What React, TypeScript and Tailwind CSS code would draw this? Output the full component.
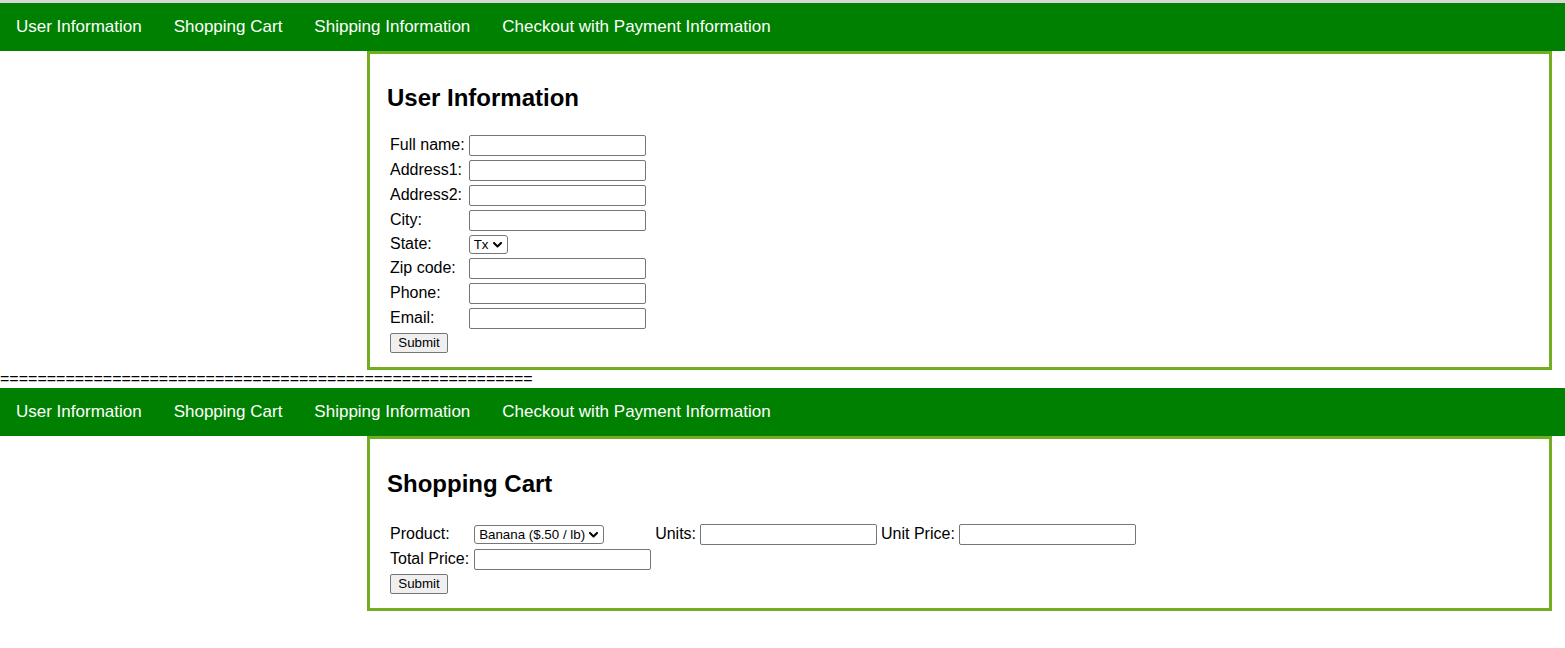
import React from "react";

const NAV_ITEMS = ["User Information", "Shopping Cart", "Shipping Information", "Checkout with Payment Information"];

const STATES = ["Tx", "Ok", "Nm", "La", "Ar"];
const PRODUCTS = ["Banana ($.50 / lb)", "Apple ($1.00 / lb)", "Orange ($.75 / lb)"];

function TopNav() {
  return (
    <ul className="flex bg-[#008000]">
      {NAV_ITEMS.map((item) => (
        <li key={item}>
          <a href="#" className="block px-[16px] py-[14px] text-[17px] leading-[20px] text-white">
            {item}
          </a>
        </li>
      ))}
    </ul>
  );
}

function Chevron() {
  return (
    <svg width="9" height="6" viewBox="0 0 9 6" className="pointer-events-none absolute right-[6px] top-[7px]">
      <path d="M1 1 L4.5 4.5 L8 1" fill="none" stroke="#000" strokeWidth="2" strokeLinecap="round" strokeLinejoin="round" />
    </svg>
  );
}

function Select({ options, width }: { options: string[]; width: string }) {
  return (
    <div className={`relative ${width}`}>
      <select className="block h-[19px] w-full appearance-none rounded-[3px] border border-[#767676] bg-white pl-[4px] pr-[16px] text-[13.333px] leading-[15px] text-black">
        {options.map((o) => (
          <option key={o}>{o}</option>
        ))}
      </select>
      <Chevron />
    </div>
  );
}

function TextInput() {
  return (
    <input
      type="text"
      className="block h-[21px] w-[177px] rounded-[2px] border border-[#767676] bg-white px-[2px] text-[13.333px] text-black"
    />
  );
}

function SubmitButton() {
  return (
    <button className="block h-[20px] w-[58px] rounded-[2px] border border-[#767676] bg-[#efefef] text-[13.333px] leading-[16px] text-black">
      Submit
    </button>
  );
}

function Label({ children }: { children: React.ReactNode }) {
  return <td className="px-px pt-0 pb-[2px] align-middle text-[16px] leading-[18px] whitespace-nowrap">{children}</td>;
}

function Field({ children }: { children: React.ReactNode }) {
  return <td className="p-px align-middle">{children}</td>;
}

function UserInfoForm() {
  const rows = ["Full name:", "Address1:", "Address2:", "City:"];
  const rows2 = ["Zip code:", "Phone:", "Email:"];
  return (
    <table className="border-separate border-spacing-[2px]">
      <tbody>
        {rows.map((r) => (
          <tr key={r}>
            <Label>{r}</Label>
            <Field>
              <TextInput />
            </Field>
          </tr>
        ))}
        <tr>
          <Label>State:</Label>
          <Field>
            <Select options={STATES} width="w-[39px]" />
          </Field>
        </tr>
        {rows2.map((r) => (
          <tr key={r}>
            <Label>{r}</Label>
            <Field>
              <TextInput />
            </Field>
          </tr>
        ))}
        <tr>
          <Field>
            <SubmitButton />
          </Field>
          <td />
        </tr>
      </tbody>
    </table>
  );
}

function CartForm() {
  return (
    <table className="border-separate border-spacing-[2px]">
      <tbody>
        <tr>
          <Label>Product:</Label>
          <td className="py-px pr-px pl-[2px] align-middle">
            <Select options={PRODUCTS} width="w-[130px]" />
          </td>
          <td className="p-px align-middle">
            <div className="flex items-center text-[16px] leading-[18px]">
              <span className="pb-[2px]">Units:</span>
              <div className="ml-[4px]">
                <TextInput />
              </div>
              <span className="ml-[4px] pb-[2px]">Unit Price:</span>
              <div className="ml-[4px]">
                <TextInput />
              </div>
            </div>
          </td>
        </tr>
        <tr>
          <Label>Total Price:</Label>
          <td className="py-px pr-px pl-[2px] align-middle">
            <TextInput />
          </td>
          <td />
        </tr>
        <tr>
          <Field>
            <SubmitButton />
          </Field>
          <td />
          <td />
        </tr>
      </tbody>
    </table>
  );
}

export default function App() {
  return (
    <div className="min-h-[648px] bg-white font-['Liberation_Sans',Arial,sans-serif] text-black">
      <div className="h-[3px] bg-[#d6d6d6]" />
      <TopNav />
      <div className="ml-[367px] w-[1185px] border-[3px] border-[#73AD21] px-[17px] pt-[10px] pb-[11px]">
        <h2 className="mt-[20px] mb-[20px] text-[24px] font-bold leading-[28px]">User Information</h2>
        <UserInfoForm />
      </div>
      <div className="text-[16px] leading-[18px] whitespace-nowrap">{"=".repeat(57)}</div>
      <TopNav />
      <div className="ml-[367px] w-[1185px] border-[3px] border-[#73AD21] px-[17px] pt-[10px] pb-[11px]">
        <h2 className="mt-[21px] mb-[23px] text-[24px] font-bold leading-[28px]">Shopping Cart</h2>
        <CartForm />
      </div>
    </div>
  );
}
